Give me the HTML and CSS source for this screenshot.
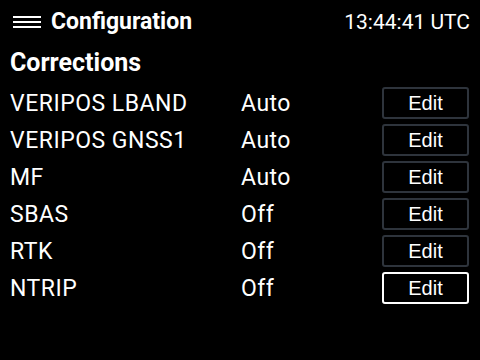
FILE: index.html
```html
<!DOCTYPE html>
<html lang="en">
  <head>
    <meta charset="UTF-8" />
    <title>Configuration</title>
    <link rel="stylesheet" href="styles.css">
  </head>
  <body>
    <div class="header">
      <div class="menu-icon">
        <span></span><span></span><span></span>
      </div>
      <h1>Configuration</h1>
      <div class="clock">13:44:41 UTC</div>
    </div>
    <h2>Corrections</h2>
    <div class="list">
      <div class="row">
        <span class="name">VERIPOS LBAND</span>
        <span class="value">Auto</span>
        <button class="edit-btn">Edit</button>
      </div>
      <div class="row">
        <span class="name">VERIPOS GNSS1</span>
        <span class="value">Auto</span>
        <button class="edit-btn">Edit</button>
      </div>
      <div class="row">
        <span class="name">MF</span>
        <span class="value">Auto</span>
        <button class="edit-btn">Edit</button>
      </div>
      <div class="row">
        <span class="name">SBAS</span>
        <span class="value">Off</span>
        <button class="edit-btn">Edit</button>
      </div>
      <div class="row">
        <span class="name">RTK</span>
        <span class="value">Off</span>
        <button class="edit-btn">Edit</button>
      </div>
      <div class="row">
        <span class="name">NTRIP</span>
        <span class="value">Off</span>
        <button class="edit-btn selected">Edit</button>
      </div>
    </div>
  </body>
</html>
```

FILE: styles.css
```css
body {
  margin: 0;
  padding: 0 10px;
  background: #000;
  color: #fff;
  font-family: Roboto, "Liberation Sans", sans-serif;
}

.header {
  display: flex;
  align-items: center;
  height: 43px;
}

.menu-icon {
  display: flex;
  flex-direction: column;
  gap: 3px;
  width: 28px;
  margin: 0 10px 0 3px;
}

.menu-icon span {
  height: 2px;
  background: #fff;
}

h1 {
  margin: 0;
  font-size: 23px;
  font-weight: 700;
  flex: 1;
}

.clock {
  font-size: 21px;
}

h2 {
  margin: 0;
  font-size: 25px;
  font-weight: 700;
  line-height: 39px;
}

.list {
  display: flex;
  flex-direction: column;
  gap: 5px;
  padding-top: 5px;
}

.row {
  display: flex;
  align-items: center;
  height: 32px;
  font-size: 23px;
  letter-spacing: 0.5px;
}

.name {
  width: 231px;
}

.value {
  flex: 1;
}

.edit-btn {
  width: 87px;
  height: 32px;
  margin-right: 1px;
  background: #000;
  color: #fff;
  border: 2px solid #2e343c;
  border-radius: 3px;
  font-family: "Liberation Sans", Arial, sans-serif;
  font-size: 20px;
  letter-spacing: 0;
  padding: 0;
}

.edit-btn.selected {
  border-color: #fff;
}
```
